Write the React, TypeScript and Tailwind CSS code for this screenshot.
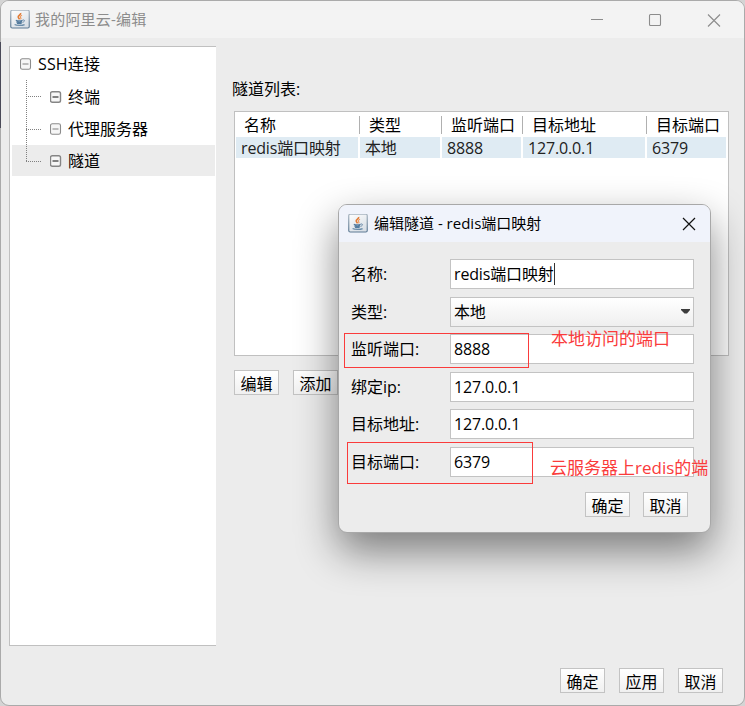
import { type ReactNode } from 'react';

const TREE_ITEMS = [
  { label: '终端', bold: true, selected: false },
  { label: '代理服务器', bold: false, selected: false },
  { label: '隧道', bold: true, selected: true },
];

const COLUMNS = [
  { title: '名称', value: 'redis端口映射' },
  { title: '类型', value: '本地' },
  { title: '监听端口', value: '8888' },
  { title: '目标地址', value: '127.0.0.1' },
  { title: '目标端口', value: '6379' },
];

const FIELDS = [
  { label: '名称:', value: 'redis端口映射', caret: true },
  { label: '类型:', value: '本地', select: true },
  { label: '监听端口:', value: '8888' },
  { label: '绑定ip:', value: '127.0.0.1' },
  { label: '目标地址:', value: '127.0.0.1' },
  { label: '目标端口:', value: '6379' },
];

function JavaIcon() {
  return (
    <svg width="20" height="20" viewBox="0 0 20 20" fill="none" className="shrink-0">
      <defs>
        <linearGradient id="java-bg" x1="0" y1="0" x2="0.6" y2="1">
          <stop offset="0" stopColor="#ffffff" />
          <stop offset="1" stopColor="#d9dfe6" />
        </linearGradient>
        <linearGradient id="java-edge" x1="0" y1="0" x2="0" y2="1">
          <stop offset="0" stopColor="#a9b5c0" />
          <stop offset="1" stopColor="#5d7a94" />
        </linearGradient>
      </defs>
      <rect x="0.75" y="0.25" width="18.5" height="17.75" rx="1.5" fill="url(#java-bg)" stroke="url(#java-edge)" strokeWidth="1.2" />
      <path d="M10.6 3c.7 1.9-2.5 2.3-2.4 4 .1 1 1.1 1.3 1.2 2.3" stroke="#e27b35" strokeWidth="1.6" />
      <path d="M12 5.2c-1.9 1-2.2 1.7-1.2 2.7.4.5.2.9-.3 1.3" stroke="#ec9a60" strokeWidth="1.2" />
      <path d="M5.8 10.3c1.8.6 5 .6 6.8 0M6.4 11.8c1.7.6 4.2.6 5.8 0M7 13.2c1.3.5 3.4.5 4.6 0" stroke="#557c9e" strokeWidth="1.3" />
      <path d="M12.8 10c2.3-.5 2.3 1.6-.2 2.4" stroke="#6b8daa" strokeWidth="1" />
      <path d="M4.6 14.6c1.8 1.2 7.8 1.2 10 0" stroke="#6b8daa" strokeWidth="1.2" />
    </svg>
  );
}

function TreeIcon({ bold }: { bold?: boolean }) {
  return (
    <svg width="12" height="12" viewBox="0 0 12 12" fill="none" className="shrink-0">
      <rect x="0.5" y="0.8" width="10" height="10.4" rx="1.8" fill="#f6f6f6" stroke={bold ? '#858585' : '#8c8c8c'} strokeWidth={bold ? 1.4 : 1.1} />
      <path d="M2.5 6h6" stroke="#808080" strokeWidth={bold ? 2 : 1.1} />
    </svg>
  );
}

function Button({ children }: { children: ReactNode }) {
  return (
    <button className="h-[25px] w-[45px] shrink-0 whitespace-nowrap border border-[#c3c3c3] bg-linear-to-b from-white to-[#f0f0f0] text-center leading-[26px]">
      {children}
    </button>
  );
}

function Tree() {
  return (
    <div className="relative h-[600px] w-[207px] border-t border-b border-l border-[#c0c0c0] bg-white pr-px pl-[2px]">
      <div className="flex h-[34px] items-center gap-[6px] pl-[8px]">
        <TreeIcon />
        <span className="tracking-[0.15px]">SSH连接</span>
      </div>
      {TREE_ITEMS.map((item) => (
        <div
          key={item.label}
          className={`flex items-center gap-[6px] pl-[38px] ${
            item.selected ? 'h-[31px] bg-[#ececec] pt-px' : 'h-[32px]'
          }`}
        >
          <TreeIcon bold={item.bold} />
          <span>{item.label}</span>
        </div>
      ))}
      <svg className="absolute top-[33px] left-[16px]" width="18" height="84" fill="none" stroke="#808080" strokeDasharray="1 1">
        <path d="M.5 0v82M0 16.5h16M0 49.5h16M0 81.5h16" />
      </svg>
    </div>
  );
}

function TunnelTable() {
  return (
    <div className="h-[245px] w-[495px] border border-[#c0c0c0] bg-white pl-px">
      <div className="grid grid-cols-[124px_82px_81px_124px_81px]">
        {COLUMNS.map((column, index) => (
          <div key={column.title} className="flex h-[25px] items-center">
            <span className={`flex-1 whitespace-nowrap pt-px ${index === 0 ? 'pl-[8px]' : 'pl-[9px]'}`}>{column.title}</span>
            {index < COLUMNS.length - 1 && <span className="h-[18px] w-px shrink-0 bg-[#b0b0b0]" />}
          </div>
        ))}
        {COLUMNS.map((column) => (
          <div key={column.title} className="h-[21px] border-r-2 border-white bg-[#dfebf3] pl-[5px] leading-[22px] tracking-[-0.15px] whitespace-nowrap text-[#222]">
            {column.value}
          </div>
        ))}
      </div>
    </div>
  );
}

function EditDialog() {
  return (
    <div className="absolute top-[204px] left-[338px] h-[329px] w-[373px] rounded-[9px] border border-[#a8a8a8] bg-[#ececec] shadow-[0_18px_42px_rgba(0,0,0,0.48)]">
      <div className="flex h-[37px] items-center rounded-t-lg bg-[#f0f3fb] pr-[14px] pl-[9px]">
        <JavaIcon />
        <span className="flex-1 pl-[6px] text-[15px] leading-5">
          <span className="relative -top-px">编辑隧道 - redis端口映射</span>
        </span>
        <svg width="14" height="14" fill="none" stroke="#111" strokeWidth="1.2">
          <path d="M1 1l12 12M13 1L1 13" />
        </svg>
      </div>
      <div className="flex flex-col gap-[7.5px] pt-[17px] pr-4 pl-3">
        {FIELDS.map((field) => (
          <div key={field.label} className="flex h-[30px] items-center">
            <span className="w-[99px]">{field.label}</span>
            <div
              className={`flex h-[30px] flex-1 items-center border border-[#c3c3c3] pr-[3px] pl-[3px] ${
                field.select ? 'bg-linear-to-b from-white to-[#efefef]' : 'bg-white'
              }`}
            >
              <span className="tracking-[-0.15px]">{field.value}</span>
              {field.caret && <span className="h-[22px] w-px bg-[#333]" />}
              {field.select && (
                <svg className="ml-auto" width="9" height="5">
                  <path d="M0 0h9v1L6 4.5H3.5L0 1z" fill="#3c3c3c" />
                </svg>
              )}
            </div>
          </div>
        ))}
      </div>
      <div className="flex justify-end gap-[13px] pt-[15px] pr-[22px]">
        <Button>确定</Button>
        <Button>取消</Button>
      </div>

      {/* annotations */}
      <div className="absolute top-[128px] left-[5px] h-[35px] w-[185px] border border-[#fa3b3b]" />
      <div className="absolute top-[237px] left-[8px] h-[42px] w-[186px] border border-[#fa3b3b]" />
      <span className="absolute top-[122px] left-[212px] text-[17px] leading-6 whitespace-nowrap text-[#fa3b3b]">本地访问的端口</span>
      <span className="absolute top-[251px] left-[211px] text-[17px] leading-6 whitespace-nowrap text-[#fa3b3b]">云服务器上redis的端</span>
    </div>
  );
}

export default function App() {
  return (
    <div className="relative h-[706px] w-[745px] overflow-hidden bg-[#d4d4d4] font-['Open_Sans','Noto_Sans_CJK_SC',sans-serif] text-[16px] leading-[22px] text-black">
      <div className="flex h-[706px] w-[745px] flex-col overflow-hidden rounded-[9px] border border-[#aaa] bg-[#ececec]">
        <div className="flex h-[37px] shrink-0 items-center bg-[#f3f3f3] pr-[23px] pl-[9px] text-[#8c8c8c]">
          <JavaIcon />
          <span className="flex-1 pl-[5px] text-[15px] leading-5 tracking-[0.2px]">
            <span className="relative -top-px">我的阿里云-编辑</span>
          </span>
          <svg width="131" height="14" fill="none" stroke="#8c8c8c" strokeWidth="1.1">
            <path d="M1 6.5h12M118 1.5l12 12M130 1.5l-12 12" />
            <rect x="59.5" y="1.5" width="11" height="11" rx="1" />
          </svg>
        </div>
        <div className="flex gap-[17px] pt-2 pl-2">
          <Tree />
          <div className="pt-[32px]">
            <div className="-ml-px">隧道列表:</div>
            <div className="pt-[11px] pl-px">
              <TunnelTable />
            </div>
            <div className="flex gap-[14px] pt-[14px] pl-px">
              <Button>编辑</Button>
              <Button>添加</Button>
            </div>
          </div>
        </div>
        <div className="mt-[22px] flex justify-end gap-[14px] pr-[21px]">
          <Button>确定</Button>
          <Button>应用</Button>
          <Button>取消</Button>
        </div>
      </div>
      {/* dark desktop content peeking past the left edge */}
      <div className="absolute top-[42px] left-0 h-[86px] w-px bg-[#4a4a58]" />
      <EditDialog />
    </div>
  );
}
